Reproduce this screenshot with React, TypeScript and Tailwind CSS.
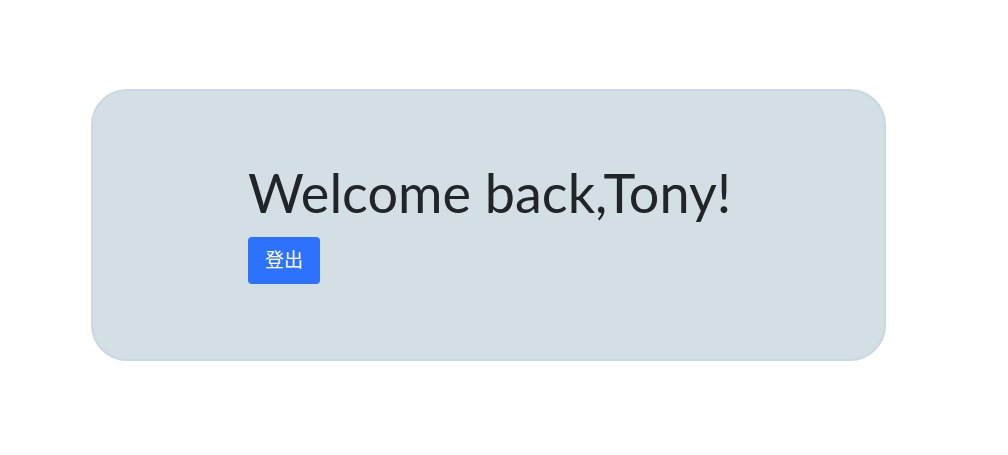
export default function App() {
  return (
    <div className="min-h-screen bg-white px-[91px] pt-[89px]" style={{ fontFamily: 'Lato, "Noto Sans CJK TC", sans-serif' }}>
      <div className="w-[795px] h-[272px] rounded-[36px] border-2 border-[#c9d9e1] bg-[#d3dfe5] pl-[155px] pt-[68px]">
        <h1 className="text-[54px] leading-[67px] font-normal text-[#212529]">Welcome back,Tony!</h1>
        <button className="mt-[11px] w-[72px] h-[47px] rounded-[4px] bg-[#2d72fd] text-white text-[19px]">登出</button>
      </div>
    </div>
  )
}
